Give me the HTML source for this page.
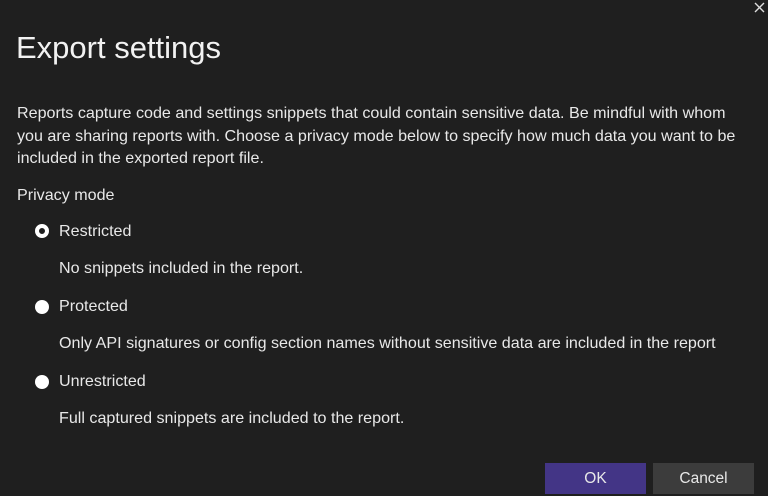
<!DOCTYPE html>
<html><head><style>
body{margin:0;width:768px;height:496px;background:#1f1f1f;color:#e8e8e8;font-family:"Liberation Sans",sans-serif;position:relative;overflow:hidden}
div,span{position:absolute;white-space:nowrap}
.t{font-size:16.1px}
.r{width:14px;height:14px;border-radius:50%;background:#fff;left:35px}
.btn{top:463px;height:31px;width:101px;font-size:15.5px;text-align:center;line-height:31px;color:#e8e8e8}
</style></head><body>
<svg style="position:absolute;left:754px;top:2px" width="11" height="11"><path d="M1 1L10 10M10 1L1 10" stroke="#ddd" stroke-width="1.4"/></svg>
<div style="left:16px;top:30px;font-size:31px;font-weight:300;color:#f2f2f2">Export settings</div>
<div class="t" style="left:17px;top:102px;line-height:22.5px;white-space:nowrap">Reports capture code and settings snippets that could contain sensitive data. Be mindful with whom<br>you are sharing reports with. Choose a privacy mode below to specify how much data you want to be<br>included in the exported report file.</div>
<div class="t" style="left:17px;top:186px">Privacy mode</div>
<div class="r" style="top:224px;box-sizing:border-box;border:4px solid #fff;background:#1f1f1f"></div>
<div class="t" style="left:59px;top:222px">Restricted</div>
<div class="t" style="left:59px;top:259px">No snippets included in the report.</div>
<div class="r" style="top:300px"></div>
<div class="t" style="left:59px;top:297px">Protected</div>
<div class="t" style="left:59px;top:334px">Only API signatures or config section names without sensitive data are included in the report</div>
<div class="r" style="top:375px"></div>
<div class="t" style="left:59px;top:372px">Unrestricted</div>
<div class="t" style="left:59px;top:409px">Full captured snippets are included to the report.</div>
<div class="btn" style="left:545px;background:#433586">OK</div>
<div class="btn" style="left:653px;background:#3c3c3c">Cancel</div>
</body></html>
